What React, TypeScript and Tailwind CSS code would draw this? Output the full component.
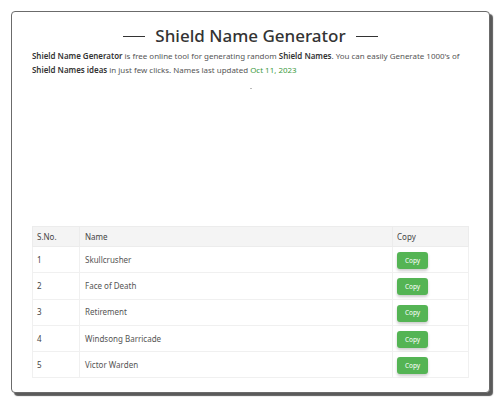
const NAMES = ['Skullcrusher', 'Face of Death', 'Retirement', 'Windsong Barricade', 'Victor Warden'];

export default function App() {
  return (
    <div className="w-[500px] h-[405px] bg-white pt-[11px] pl-[11px] font-['Noto_Sans',sans-serif]">
      <div className="w-[479px] h-[382px] border border-[#6b6b6b] rounded-[4px] bg-white shadow-[3px_3px_1px_#5a5a5a] overflow-hidden">
        <div className="flex items-center justify-center gap-[10px] pt-[12px]">
          <span className="w-[22px] h-px bg-[#333]" />
          <h1 className="text-[17px] leading-[24px] text-[#333] font-medium">Shield Name Generator</h1>
          <span className="w-[22px] h-px bg-[#333]" />
        </div>
        <p className="px-[20px] mt-[2px] text-[7.95px] leading-[13.5px] text-[#555]">
          <b className="text-[#333] font-semibold">Shield Name Generator</b> is free online tool for generating random{' '}
          <b className="text-[#333] font-semibold">Shield Names</b>. You can easily Generate 1000's of{' '}
          <b className="text-[#333] font-semibold">Shield Names ideas</b> in just few clicks. Names last updated{' '}
          <span className="text-[#3c9a3c]">Oct 11, 2023</span>
        </p>
        <div className="h-[149px] flex justify-center pt-[11px]">
          <span className="w-[2px] h-[1px] bg-[#bbb]" />
        </div>
        <table className="ml-[20px] w-[437px] border-collapse text-[8px] text-[#555]">
          <thead>
            <tr className="bg-[#f4f4f4] h-[20px] text-[#444]">
              <th className="w-[47px] text-left font-normal pl-[4px] border border-[#ececec]">S.No.</th>
              <th className="text-left font-normal pl-[5px] border border-[#ececec]">Name</th>
              <th className="w-[76px] text-left font-normal pl-[4px] border border-[#ececec]">Copy</th>
            </tr>
          </thead>
          <tbody>
            {NAMES.map((name, i) => (
              <tr key={name} className="h-[26.3px]">
                <td className="pl-[4px] border border-[#f0f0f0] text-[#444]">{i + 1}</td>
                <td className="pl-[5px] border border-[#f0f0f0]">{name}</td>
                <td className="pl-[4px] border border-[#f0f0f0]">
                  <button className="w-[31px] h-[17px] mt-[2px] rounded-[3px] bg-[#54b454] text-white text-[6.5px] shadow-[0_2px_3px_rgba(0,0,0,0.2)]">
                    Copy
                  </button>
                </td>
              </tr>
            ))}
          </tbody>
        </table>
      </div>
    </div>
  );
}
